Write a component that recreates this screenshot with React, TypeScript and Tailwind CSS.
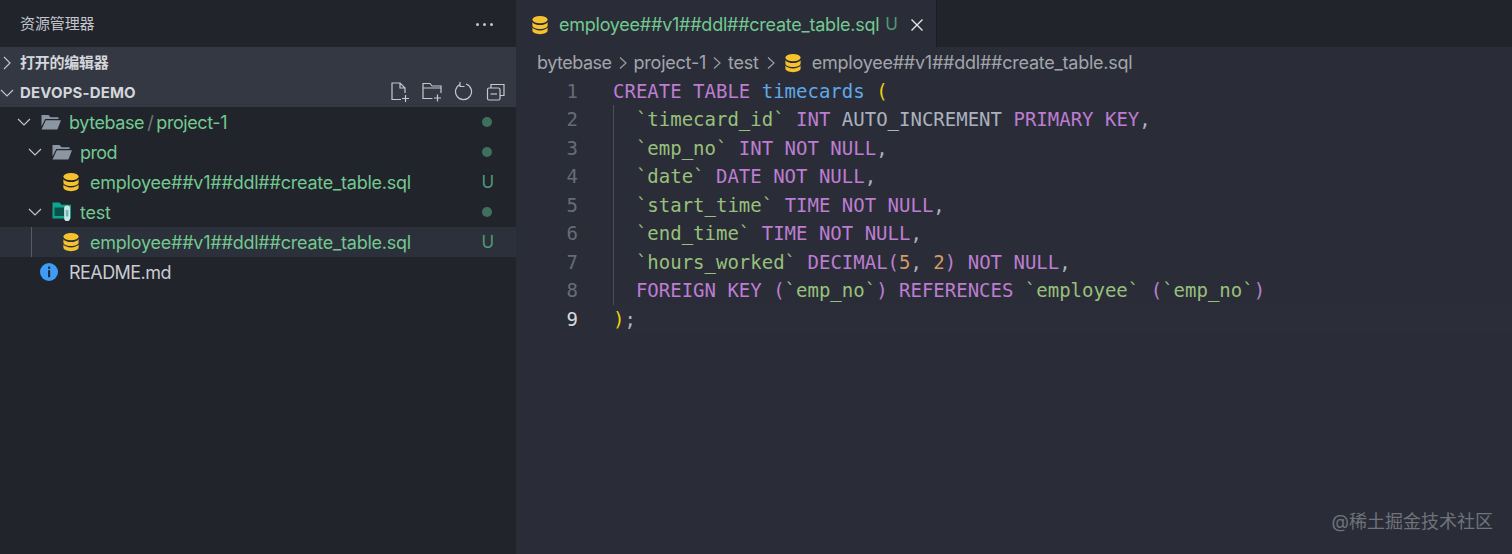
import React from "react";

const Db = ({ s = 20 }: { s?: number }) => (
  <svg width={s} height={s} viewBox="0 0 20 20" className="shrink-0">
    <ellipse cx="10" cy="4.6" rx="7.6" ry="3.6" fill="#f5c22e" />
    <path d="M2.4 7.2c1.2 1.9 4.2 2.8 7.6 2.8s6.4-.9 7.6-2.8v3.2c0 2-3.4 3.6-7.6 3.6s-7.6-1.6-7.6-3.6z" fill="#f5c22e" />
    <path d="M2.4 12.6c1.2 1.9 4.2 2.8 7.6 2.8s6.4-.9 7.6-2.8v3c0 2-3.4 3.6-7.6 3.6s-7.6-1.6-7.6-3.6z" fill="#f5c22e" />
  </svg>
);

const Folder = () => (
  <svg width="20" height="18" viewBox="0 0 20 18" className="shrink-0">
    <path d="M0.5 2h7l2 2.2h8V6H4.2L0.5 13.5z" fill="#8a97a2" />
    <path d="M0.5 16.5L4.8 7.2H20l-3.6 9.3z" fill="#8a97a2" />
  </svg>
);

const TestFolder = () => (
  <svg width="20" height="22" viewBox="0 0 20 22" className="shrink-0">
    <path d="M0.5 1.5h7l2 2.2H19v13.8H0.5z" fill="#0ea58c" />
    <path d="M2.5 6.5h9.5v8.5H2.5z" fill="#0b4f4a" />
    <rect x="12.2" y="4.5" width="5.8" height="15.5" rx="2.8" fill="#cfe6e6" />
    <rect x="13.8" y="9" width="2.6" height="6.5" fill="#6fb7b3" />
  </svg>
);

const Info = () => (
  <svg width="18" height="18" viewBox="0 0 18 18" className="shrink-0">
    <circle cx="9" cy="9" r="9" fill="#3f9cf5" />
    <rect x="8" y="3.6" width="2.2" height="2.2" fill="#1f2a3a" />
    <rect x="8" y="7.2" width="2.2" height="7" fill="#1f2a3a" />
  </svg>
);

const Chev = ({ open }: { open?: boolean }) => (
  <svg width="14" height="14" viewBox="0 0 14 14" fill="none" stroke="#c0c4cb" strokeWidth="1.2" className="shrink-0">
    {open ? <path d="M1 4l6 6 6-6" /> : <path d="M4 1l6 6-6 6" />}
  </svg>
);

const Gt = () => (
  <svg width="10" height="14" viewBox="0 0 10 14" fill="none" stroke="#9a9ea6" strokeWidth="1.2" className="shrink-0">
    <path d="M2 1.5l6 5.5-6 5.5" />
  </svg>
);

const ToolIcons = () => (
  <div className="flex items-center text-[#c5c8ce]">
    <svg width="22" height="22" viewBox="0 0 22 22" fill="none" stroke="currentColor" strokeWidth="1.2">
      <path d="M12 18.5H3V2h8l5 5v5M11 2v5h5M16.5 14v7M13 17.5h7" />
    </svg>
    <svg width="22" height="22" viewBox="0 0 22 22" fill="none" stroke="currentColor" strokeWidth="1.2" className="ml-[10px]">
      <path d="M11.5 17.5H2V2.5h7l2 2.5h9v7M2 7h18M16.5 13.5v7M13 17h7" />
    </svg>
    <svg width="22" height="22" viewBox="0 0 22 22" fill="none" stroke="currentColor" strokeWidth="1.2" className="ml-[12px]">
      <path d="M5.5 3.2A8 8 0 1 0 11 3M5 1v4.5h4.5" />
    </svg>
    <svg width="22" height="22" viewBox="0 0 22 22" fill="none" stroke="currentColor" strokeWidth="1.2" className="ml-[8px]">
      <path d="M6 7V3.5h13v11h-4" />
      <rect x="2.5" y="7" width="12.5" height="12" rx="1.5" />
      <path d="M5.5 13h6.5" />
    </svg>
  </div>
);

const green = "text-[#73c991]";

function Row({
  indent, chev, icon, children, badge, selected,
}: {
  indent: number; chev?: boolean; icon: React.ReactNode; children: React.ReactNode; badge?: "dot" | "U"; selected?: boolean;
}) {
  return (
    <div className={`relative flex h-[30px] items-center pr-[22px] ${selected ? "bg-[#2c303a]" : ""}`} style={{ paddingLeft: indent }}>
      {selected && <div className="absolute left-[31px] top-0 h-full w-px bg-[#565b66]" />}
      <div className={`flex shrink-0 items-center ${chev ? "w-[24px]" : "w-[26px]"}`}>{chev && <Chev open />}</div>
      <div className={`flex shrink-0 items-center ${chev ? "w-[28px]" : "w-[29px]"}`}>{icon}</div>
      <div className="flex-1 truncate">{children}</div>
      {badge === "dot" && <div className="mr-[2px] h-[10px] w-[10px] rounded-full bg-[#3f6f5e]" />}
      {badge === "U" && <div className="pt-[2px] text-[17px] text-[#4f9a76]">U</div>}
    </div>
  );
}

const K = ({ c }: { c: string }) => <span className="text-[#bd7dd2]">{c}</span>;
const S = ({ c }: { c: string }) => <span className="text-[#98c07c]">{c}</span>;
const W = ({ c }: { c: string }) => <span className="text-[#abb2bf]">{c}</span>;
const N = ({ c }: { c: string }) => <span className="text-[#d19a66]">{c}</span>;
const Y = ({ c }: { c: string }) => <span className="text-[#f0cf10]">{c}</span>;

const lines: React.ReactNode[] = [
  <><K c="CREATE TABLE " /><span className="text-[#61a8e8]">timecards</span> <Y c="(" /></>,
  <>  <S c="`timecard_id`" /> <K c="INT" /> <W c="AUTO_INCREMENT" /> <K c="PRIMARY KEY" /><W c="," /></>,
  <>  <S c="`emp_no`" /> <K c="INT NOT NULL" /><W c="," /></>,
  <>  <S c="`date`" /> <K c="DATE NOT NULL" /><W c="," /></>,
  <>  <S c="`start_time`" /> <K c="TIME NOT NULL" /><W c="," /></>,
  <>  <S c="`end_time`" /> <K c="TIME NOT NULL" /><W c="," /></>,
  <>  <S c="`hours_worked`" /> <K c="DECIMAL(" /><N c="5" /><W c=", " /><N c="2" /><K c=")" /> <K c="NOT NULL" /><W c="," /></>,
  <>  <K c="FOREIGN KEY (" /><S c="`emp_no`" /><K c=") REFERENCES " /><S c="`employee`" /> <K c="(" /><S c="`emp_no`" /><K c=")" /></>,
  <><Y c=")" /><W c=";" /></>,
];

const FILE = "employee##v1##ddl##create_table.sql";

export default function App() {
  return (
    <div className="flex h-[554px] w-[1512px] overflow-hidden bg-[#2a2d37] font-['Inter','Noto_Sans_CJK_SC',sans-serif] text-[18px] tracking-[-0.23px]">
      <aside className="flex w-[516px] shrink-0 flex-col bg-[#21242b]">
        <div className="flex h-[47px] items-center justify-between pl-[20px] pr-[23px] pt-[2px] text-[15px] tracking-[-0.1px] text-[#c3c6cc]">
          <span>资源管理器</span>
          <span className="flex gap-[4px]">
            <i className="h-[3px] w-[3px] rounded-full bg-[#c3c6cc]" />
            <i className="h-[3px] w-[3px] rounded-full bg-[#c3c6cc]" />
            <i className="h-[3px] w-[3px] rounded-full bg-[#c3c6cc]" />
          </span>
        </div>
        <div className="h-[60px] bg-[#333842] text-[15px] font-bold text-[#d3d6db]">
          <div className="flex h-[30px] items-center pt-[2px]">
            <div className="flex w-[20px]"><Chev /></div>
            <span>打开的编辑器</span>
          </div>
          <div className="flex h-[30px] items-center justify-between pr-[9px]">
            <div className="flex items-center pt-[2px]">
              <div className="flex w-[20px]"><Chev open /></div>
              <span className="tracking-[0.15px]">DEVOPS-DEMO</span>
            </div>
            <ToolIcons />
          </div>
        </div>
        <div>
          <Row indent={17} chev icon={<Folder />} badge="dot">
            <span className={`${green} tracking-[-0.42px]`}>bytebase<span className="mx-[3px] text-[#6b7f76]">/</span>project-1</span>
          </Row>
          <Row indent={28} chev icon={<Folder />} badge="dot"><span className={`${green} tracking-[-0.6px]`}>prod</span></Row>
          <Row indent={35} icon={<Db />} badge="U"><span className={green}>{FILE}</span></Row>
          <Row indent={28} chev icon={<TestFolder />} badge="dot"><span className={green}>test</span></Row>
          <Row indent={35} icon={<Db />} badge="U" selected><span className={green}>{FILE}</span></Row>
          <Row indent={14} icon={<Info />}><span className="tracking-[-0.55px] text-[#c8cbd1]">README.md</span></Row>
        </div>
      </aside>
      <main className="relative flex min-w-0 flex-1 flex-col">
        <div className="flex h-[47px] shrink-0 bg-[#21242b]">
          <div className="flex w-[421px] items-center border-r border-[#1a1c22] bg-[#2a2d37] pl-[14px] pt-[2px]">
            <Db />
            <span className={`ml-[9px] tracking-[-0.25px] ${green}`}>{FILE}</span>
            <span className="ml-[6px] text-[17px] text-[#4f9a76]">U</span>
            <svg width="14" height="14" viewBox="0 0 14 14" fill="none" stroke="#e4e6ea" strokeWidth="1.4" className="ml-[12px]">
              <path d="M1.5 1.5l11 11M12.5 1.5l-11 11" />
            </svg>
          </div>
        </div>
        <div className="flex h-[29.7px] shrink-0 items-center pl-[21px] pt-[2px] text-[#a2a5ac]">
          <span className="tracking-[-0.5px]">bytebase</span>
          <span className="mx-[6px]"><Gt /></span>
          <span>project-1</span>
          <span className="mx-[6px]"><Gt /></span>
          <span>test</span>
          <span className="mx-[7px]"><Gt /></span>
          <span><Db /></span>
          <span className="ml-[9px] tracking-[-0.24px]">{FILE}</span>
        </div>
        <div className="font-['DejaVu_Sans_Mono',monospace] text-[19px] leading-[28.5px] tracking-normal">
          {lines.map((l, i) => (
            <div key={i} className="relative flex h-[28.5px]">
              <div className={`w-[62px] shrink-0 text-right ${i === 8 ? "text-[#d7d9de]" : "text-[#666c77]"}`}>{i + 1}</div>
              <div className={`ml-[35px] flex-1 whitespace-pre ${i === 8 ? "bg-[#2b2e38]" : ""}`}>{l}</div>
              {i > 0 && i < 8 && <div className="absolute left-[97px] top-0 h-full w-px bg-[#4a4e58]" />}
            </div>
          ))}
        </div>
        <div className="absolute bottom-[19px] right-[19px] text-[18px] tracking-normal text-[#6f737b]">@稀土掘金技术社区</div>
      </main>
    </div>
  );
}
